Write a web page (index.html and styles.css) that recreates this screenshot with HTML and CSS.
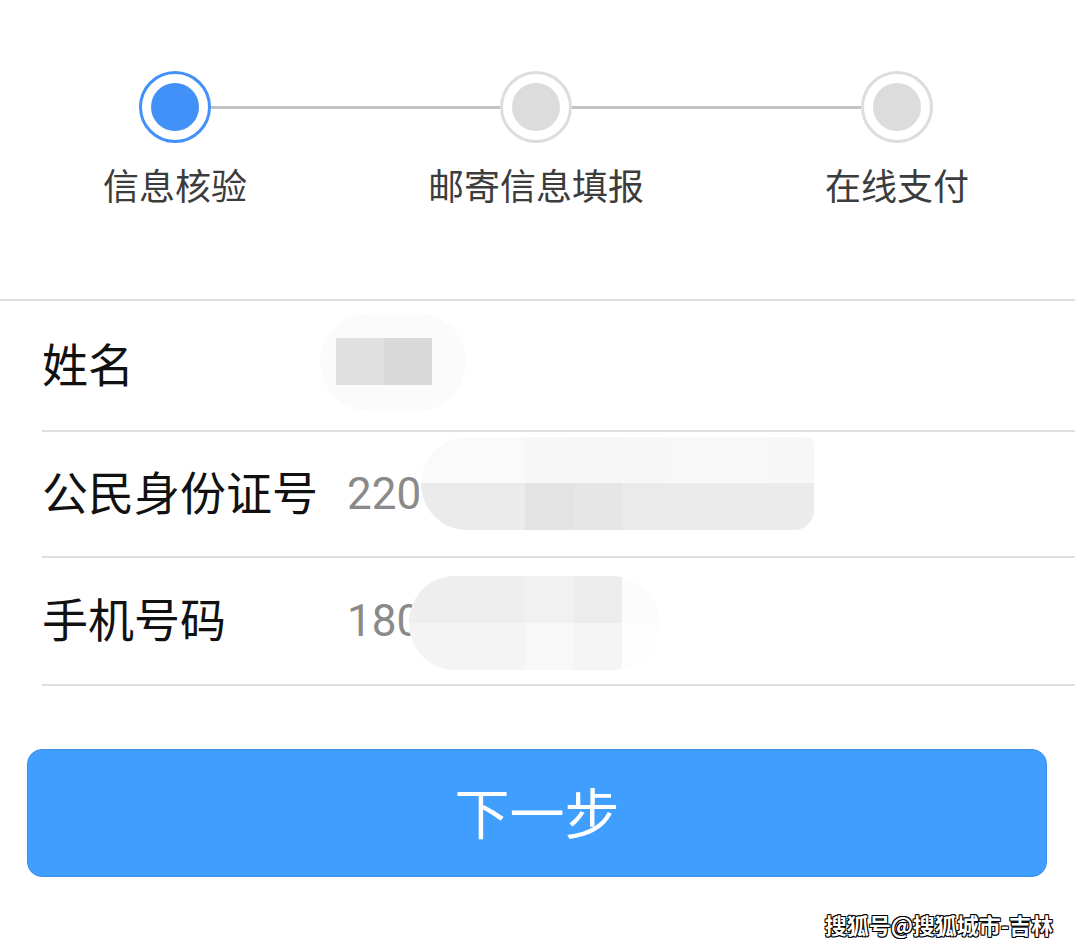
FILE: index.html
```html
<!DOCTYPE html>
<html lang="zh-CN">
<head>
<meta charset="utf-8">
<title>信息核验</title>
<link rel="stylesheet" href="styles.css">
</head>
<body>
<div class="page">
  <div class="steps">
    <div class="track">
      <span class="dot dot-active"></span>
      <span class="line"></span>
      <span class="dot"></span>
      <span class="line"></span>
      <span class="dot"></span>
    </div>
    <div class="labels">
      <span class="label">信息核验</span>
      <span class="label">邮寄信息填报</span>
      <span class="label">在线支付</span>
    </div>
  </div>

  <div class="form">
    <div class="row row-name">
      <span class="field">姓名</span>
      <span class="value">
        <span class="blur blur-name"><span class="c c1"></span><span class="c c2"></span></span>
      </span>
    </div>
    <div class="row row-id">
      <span class="field">公民身份证号</span>
      <span class="value">220<span class="blur blur-id"><span class="band band-top"></span><span class="band band-bottom"></span></span></span>
    </div>
    <div class="row row-phone">
      <span class="field">手机号码</span>
      <span class="value">180<span class="blur blur-phone"><span class="band band-top"></span><span class="band band-bottom"></span></span></span>
    </div>
  </div>

  <button class="next" type="button">下一步</button>

  <div class="watermark">搜狐号@搜狐城市-吉林</div>
</div>
</body>
</html>
```

FILE: styles.css
```css
* { box-sizing: border-box; }
html, body { margin: 0; padding: 0; background: #fff; }
body {
  font-family: Roboto, "Noto Sans CJK SC", "Noto Sans", sans-serif;
  color: #111;
}
.page {
  position: relative;
  width: 1075px;
  min-height: 950px;
  overflow: hidden;
}

/* steps */
.steps { padding-top: 71px; padding-bottom: 89px; }
.track {
  display: flex;
  align-items: center;
  padding-left: 139px;
  padding-right: 142px;
}
.dot {
  flex: none;
  width: 72px;
  height: 72px;
  border-radius: 50%;
  border: 3px solid #dddddd;
  display: flex;
  align-items: center;
  justify-content: center;
}
.dot::after {
  content: "";
  width: 48px;
  height: 48px;
  border-radius: 50%;
  background: #dcdcdc;
}
.dot-active { border-color: #4291f8; }
.dot-active::after { background: #4291f8; }
.line {
  flex: 1;
  height: 3px;
  background: #c2c2c2;
}
.labels {
  display: flex;
  gap: 121px;
  padding-left: 55px;
  margin-top: 24px;
}
.label {
  width: 240px;
  text-align: center;
  font-size: 36px;
  line-height: 43px;
  color: #3c3c3c;
  white-space: nowrap;
}

/* form */
.form { border-top: 2px solid #dedede; }
.row {
  display: flex;
  align-items: center;
  height: 128px;
  margin-left: 42px;
  border-bottom: 2px solid #e0e0e0;
}
.row-name { height: 131px; }
.row-id { height: 126px; }
.row-phone { height: 128px; }
.field {
  width: 305px;
  flex: none;
  font-size: 46px;
  line-height: 54px;
  color: #111;
  white-space: nowrap;
}
.value {
  display: flex;
  align-items: center;
  font-size: 44px;
  color: #8a8a8a;
}

/* blurred (masked) values */
.blur { display: inline-block; position: relative; }
.blur-name {
  margin-left: -27px;
  width: 146px;
  height: 98px;
  border-radius: 50px;
  background: #fbfbfb;
  display: flex;
  align-items: center;
  padding-left: 16px;
  margin-bottom: 8px;
}
.c { width: 48px; height: 47px; }
.c1 { background: #e0e0e0; }
.c2 { background: #d9d9d9; }

.blur-id {
  width: 393px;
  height: 93px;
  margin-left: 0;
  margin-bottom: 22px;
  border-radius: 46px 8px 20px 46px;
  overflow: hidden;
  display: flex;
  flex-direction: column;
}
.band { flex: 1; display: block; }
.blur-id .band-top {
  background: linear-gradient(90deg, #fafafa 0 104px, #f7f7f7 104px 153px, #f6f6f6 153px 201px, #f7f7f7 201px 248px, #f8f8f8 248px 346px, #f7f7f7 346px);
}
.blur-id .band-bottom {
  background: linear-gradient(90deg, #ebebeb 0 104px, #e3e3e3 104px 153px, #e6e6e6 153px 201px, #eaeaea 201px 248px, #ebebeb 248px 346px, #ebebeb 346px);
}

.blur-phone {
  width: 250px;
  height: 94px;
  margin-left: -12px;
  margin-top: 4px;
  border-radius: 46px 47px 47px 46px;
  overflow: hidden;
  display: flex;
  flex-direction: column;
}
.blur-phone .band-top {
  background: linear-gradient(90deg, #eeeeee 0 116px, #f1f1f1 116px 165px, #ececec 165px 213px, #fcfcfc 213px);
}
.blur-phone .band-bottom {
  background: linear-gradient(90deg, #f4f4f4 0 116px, #f8f8f8 116px 165px, #f5f5f5 165px 213px, #fdfdfd 213px);
}

/* button */
.next {
  display: block;
  margin: 63px 28px 0 27px;
  width: calc(100% - 55px);
  height: 128px;
  border: 1px solid #3b8fe8;
  border-radius: 15px;
  background: #409efe;
  color: #fff;
  font-family: "Noto Sans CJK SC", sans-serif;
  font-size: 55px;
  line-height: 60px;
  padding: 0 0 6px 0;
}

/* watermark overlay */
.watermark {
  position: absolute;
  right: 22px;
  top: 909px;
  font-family: "Noto Sans CJK SC", sans-serif;
  font-size: 22px;
  font-weight: 700;
  line-height: 30px;
  color: #fff;
  text-shadow: 1px 1px 0 #000, -1px -1px 0 #000, 1px -1px 0 #000, -1px 1px 0 #000, 0 1px 0 #000, 0 -1px 0 #000;
  white-space: nowrap;
}
```
